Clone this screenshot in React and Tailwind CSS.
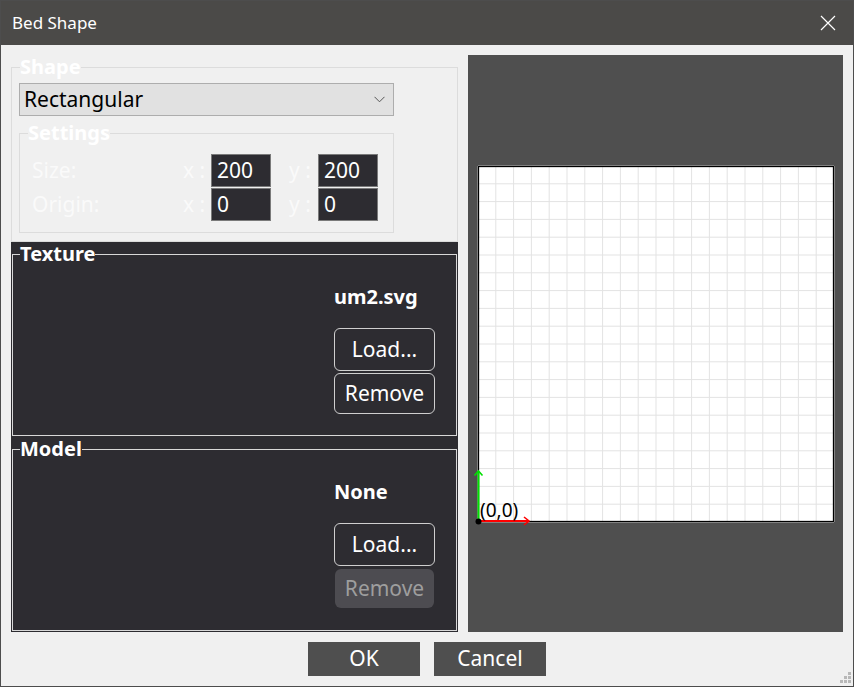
export default function App() {
  const cells = Array.from({ length: 21 }, (_, i) => i * 17.8);
  return (
    <div className="relative w-[854px] h-[687px] flex flex-col bg-[#f0f0f0] border border-[#4d4d4d] font-['Noto_Sans',sans-serif] overflow-hidden">
      {/* Title bar */}
      <div className="h-[44px] flex-none bg-[#4b4a48] flex items-center justify-between pl-[11px] pr-[17px] text-white text-[17px]">
        <span>Bed Shape</span>
        <svg width="16" height="16" viewBox="0 0 16 16">
          <path d="M1 1L15 15M15 1L1 15" stroke="#fff" strokeWidth="1.2" />
        </svg>
      </div>

      {/* Body */}
      <div className="flex-1 flex flex-col px-[10px] pt-[10px]">
        <div className="flex gap-[10px] h-[577px]">
          {/* Left column */}
          <div className="w-[447px] flex flex-col">
            <fieldset className="h-[187px] flex-none border border-[#dcdcdc] px-[8px]">
              <legend className="text-[20px] font-bold leading-[24px] text-white">Shape</legend>
              <div className="-ml-[1px] mt-[4px] w-[375px] h-[33px] bg-[#e1e1e1] border border-[#adadad] flex items-center justify-between pl-[4px] pr-[8px] text-[21px] text-black">
                <span>Rectangular</span>
                <svg width="11" height="7" viewBox="0 0 11 7">
                  <path d="M0.5 0.8L5.5 5.8L10.5 0.8" stroke="#555" strokeWidth="1" fill="none" />
                </svg>
              </div>
              <fieldset className="-ml-[1px] mt-[5px] w-[375px] h-[112px] border border-[#dcdcdc] px-[8px]">
                <legend className="text-[20px] font-bold leading-[24px] text-white">Settings</legend>
                <div className="mt-[9px] flex flex-col gap-[1px] text-[21px] text-[#fafafa]">
                  {[
                    ['Size:', '200', '200'],
                    ['Origin:', '0', '0'],
                  ].map(([label, x, y]) => (
                    <div key={label} className="flex items-center h-[33px]">
                      <span className="pl-[4px] w-[155px]">{label}</span>
                      <span className="w-[28px]">x :</span>
                      <div className="w-[60px] h-[33px] bg-[#2d2c31] border border-[#7a7a7a] text-white pl-[5px] leading-[30px]">{x}</div>
                      <span className="ml-[18px] w-[29px]">y :</span>
                      <div className="w-[60px] h-[33px] bg-[#2d2c31] border border-[#7a7a7a] text-white pl-[5px] leading-[30px]">{y}</div>
                    </div>
                  ))}
                </div>
              </fieldset>
            </fieldset>

            {/* Texture */}
            <div className="h-[195px] flex-none bg-[#2d2c31] px-[1px]">
              <fieldset className="h-[194px] border border-[#d8d8d8] px-[7px]">
                <legend className="text-[20px] font-bold leading-[24px] text-white">Texture</legend>
                <div className="pl-[314px] flex flex-col items-start text-white">
                  <span className="mt-[19px] text-[20px] font-bold leading-[24px]">um2.svg</span>
                  <button className="mt-[19px] w-[101px] h-[43px] rounded-[6px] border border-[#cfcfcf] text-[21px]">Load...</button>
                  <button className="mt-[2px] w-[101px] h-[41px] rounded-[6px] border border-[#cfcfcf] text-[21px]">Remove</button>
                </div>
              </fieldset>
            </div>

            {/* Model */}
            <div className="h-[195px] flex-none bg-[#2d2c31] px-[1px]">
              <fieldset className="h-[194px] border border-[#d8d8d8] px-[7px]">
                <legend className="text-[20px] font-bold leading-[24px] text-white">Model</legend>
                <div className="pl-[314px] flex flex-col items-start text-white">
                  <span className="mt-[19px] text-[20px] font-bold leading-[24px]">None</span>
                  <button className="mt-[19px] w-[101px] h-[43px] rounded-[6px] border border-[#cfcfcf] text-[21px]">Load...</button>
                  <button className="mt-[3px] ml-[1px] w-[99px] h-[39px] rounded-[6px] bg-[#4d4c51] text-[#9e9e9e] text-[21px]">Remove</button>
                </div>
              </fieldset>
            </div>
          </div>

          {/* Bed preview */}
          <div className="w-[375px] bg-[#4f4f4f] flex items-center justify-center">
            <svg width="356" height="356" viewBox="0 0 356 356" className="overflow-visible">
              <rect x="0" y="0" width="356" height="356" fill="#fff" />
              {cells.map((p) => (
                <g key={p}>
                  <line x1={p} y1="0" x2={p} y2="356" stroke="#e3e3e3" strokeWidth="1" />
                  <line x1="0" y1={p} x2="356" y2={p} stroke="#e3e3e3" strokeWidth="1" />
                </g>
              ))}
              <rect x="0.5" y="0.5" width="355" height="355" fill="none" stroke="#000" strokeWidth="1.3" />
              <path d="M0.5 355V306" stroke="#00e000" strokeWidth="2" />
              <path d="M-3.5 309.5L0.5 305L4.5 309.5" stroke="#00e000" strokeWidth="1.6" fill="none" />
              <path d="M0 355H51" stroke="#ff0000" strokeWidth="2" />
              <path d="M46 351L51 355L46 359" stroke="#ff0000" strokeWidth="1.6" fill="none" />
              <circle cx="0.5" cy="355.5" r="3" fill="#000" />
              <text x="2" y="351" fontSize="19" fill="#000" fontFamily="'Noto Sans', sans-serif">(0,0)</text>
            </svg>
          </div>
        </div>

        {/* Dialog buttons */}
        <div className="mt-[10px] flex justify-center gap-[14px]">
          <button className="w-[112px] h-[34px] bg-[#4f4f4f] text-white text-[21px]">OK</button>
          <button className="w-[112px] h-[34px] bg-[#4f4f4f] text-white text-[21px]">Cancel</button>
        </div>
      </div>

      {/* Size grip */}
      <svg className="absolute right-[2px] bottom-[3px]" width="11" height="11" viewBox="0 0 11 11">
        {[[8, 0], [4, 4], [8, 4], [0, 8], [4, 8], [8, 8]].map(([x, y]) => (
          <rect key={`${x}-${y}`} x={x} y={y} width="3" height="3" fill="#b8b8b8" />
        ))}
      </svg>
    </div>
  );
}
